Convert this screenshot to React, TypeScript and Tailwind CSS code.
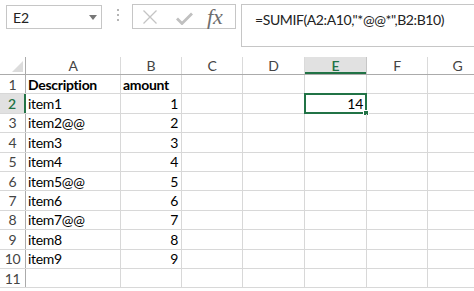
const cols = ['A', 'B', 'C', 'D', 'E', 'F', 'G']
const widths = ['w-[95px]', 'w-[61px]', 'w-[61px]', 'w-[62px]', 'w-[62px]', 'w-[61px]', 'w-[60px]']

const rows: { n: number; a: string; b: string; bold?: boolean }[] = [
  { n: 1, a: 'Description', b: 'amount', bold: true },
  { n: 2, a: 'item1', b: '1' },
  { n: 3, a: 'item2@@', b: '2' },
  { n: 4, a: 'item3', b: '3' },
  { n: 5, a: 'item4', b: '4' },
  { n: 6, a: 'item5@@', b: '5' },
  { n: 7, a: 'item6', b: '6' },
  { n: 8, a: 'item7@@', b: '7' },
  { n: 9, a: 'item8', b: '8' },
  { n: 10, a: 'item9', b: '9' },
  { n: 11, a: '', b: '' }
]

function FormulaBar() {
  return (
    <div className="flex h-[57px] items-start">
      {/* Name box */}
      <div className="ml-[6px] mt-[5px] flex h-[24px] w-[96px] items-center justify-between border border-[#c6c6c6] pl-[6px] pr-[4px] text-[14px] text-[#222]">
        <span>E2</span>
        <svg width="8" height="5" viewBox="0 0 8 5"><path d="M0 0h8L4 5z" fill="#777" /></svg>
      </div>
      <div className="ml-[15px] mt-[9px] flex flex-col gap-[3px]">
        <span className="h-[2px] w-[2px] bg-[#b5b5b5]" />
        <span className="h-[2px] w-[2px] bg-[#b5b5b5]" />
        <span className="h-[2px] w-[2px] bg-[#b5b5b5]" />
      </div>
      {/* Cancel / enter / fx */}
      <div className="ml-[13px] mt-[4px] flex h-[25px] w-[104px] items-center border border-[#c6c6c6] pl-[9px]">
        <svg width="16" height="16" viewBox="0 0 16 16"><path d="M1.5 1.5l13 13M14.5 1.5l-13 13" stroke="#c4c4c4" strokeWidth="1.3" /></svg>
        <svg className="ml-[18px] mt-[3px]" width="17" height="13" viewBox="0 0 17 13"><path d="M1 6.5l5 5L16 1.5" stroke="#c0c0c0" strokeWidth="2.8" fill="none" /></svg>
        <span className="ml-[14px] text-[22px] italic leading-none text-[#6e6e6e]" style={{ fontFamily: '"Liberation Serif", serif' }}>fx</span>
      </div>
      {/* Formula input */}
      <div className="ml-[5px] mt-[4px] h-[43px] flex-1 border border-r-0 border-[#c6c6c6] pl-[13px] pt-[4px] text-[14px] tracking-[-0.4px] text-[#222]">
        =SUMIF(A2:A10,"*@@*",B2:B10)
      </div>
    </div>
  )
}

function Grid() {
  return (
    <div className="text-[14px] tracking-[-0.3px] text-black">
      {/* Column headers */}
      <div className="flex h-[18px] border-b border-[#ababab]">
        <div className="relative w-[26px] shrink-0 border-r border-[#ababab]">
          <svg className="absolute bottom-[2px] right-[2px]" width="11" height="11" viewBox="0 0 11 11"><path d="M11 0v11H0z" fill="#dcdcdc" /></svg>
        </div>
        {cols.map((c, i) => (
          <div
            key={c}
            className={`${widths[i]} flex shrink-0 items-center justify-center border-r text-[14px] ${
              c === 'E'
                ? 'border-[#c6c6c6] bg-[#e1e1e1] font-semibold text-[#217346] shadow-[inset_0_-2px_0_#217346]'
                : 'border-[#dadada] text-[#444]'
            }`}
          >
            {c}
          </div>
        ))}
      </div>
      {rows.map((r) => (
        <div key={r.n} className="flex h-[19.4px] border-b border-[#d8d8d8]">
          <div
            className={`flex w-[26px] shrink-0 items-center justify-center border-r text-[14px] ${
              r.n === 2
                ? 'border-[#217346] bg-[#e1e1e1] font-semibold text-[#217346] border-r-2'
                : 'border-[#ababab] text-[#444]'
            }`}
          >
            {r.n}
          </div>
          <div className={`${widths[0]} flex shrink-0 items-center border-r border-[#d8d8d8] pl-[2px] ${r.bold ? 'font-bold' : ''}`}>
            {r.a}
          </div>
          <div
            className={`${widths[1]} flex shrink-0 items-center border-r border-[#d8d8d8] ${
              r.bold ? 'pl-[2px] font-bold' : 'justify-end pr-[3px]'
            }`}
          >
            {r.b}
          </div>
          <div className={`${widths[2]} shrink-0 border-r border-[#d8d8d8]`} />
          <div className={`${widths[3]} shrink-0 border-r border-[#d8d8d8]`} />
          <div className={`${widths[4]} relative flex shrink-0 items-center justify-end border-r border-[#d8d8d8] pr-[3px]`}>
            {r.n === 2 && (
              <>
                <div className="absolute -left-[1px] -top-[1px] h-[21px] w-[63px] border-2 border-[#217346]" />
                <div className="absolute -bottom-[3px] -right-[3px] h-[6px] w-[6px] border border-white bg-[#217346]" />
                <span className="relative">14</span>
              </>
            )}
          </div>
          <div className={`${widths[5]} shrink-0 border-r border-[#d8d8d8]`} />
          <div className={`${widths[6]} shrink-0`} />
        </div>
      ))}
    </div>
  )
}

export default function App() {
  return (
    <div className="h-[291px] w-[474px] overflow-hidden bg-white" style={{ fontFamily: 'Lato, "Liberation Sans", sans-serif' }}>
      <FormulaBar />
      <Grid />
    </div>
  )
}
